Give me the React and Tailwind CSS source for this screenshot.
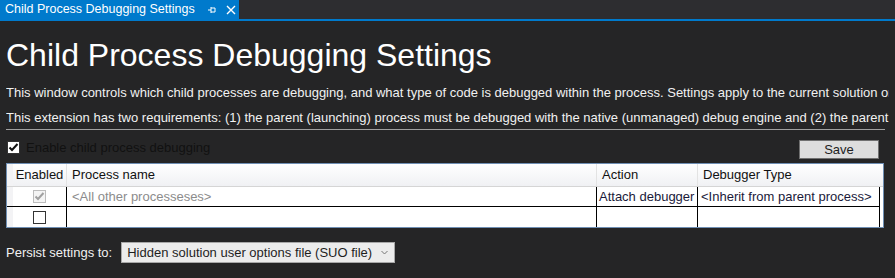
import React from "react";

const font = { fontFamily: '"Liberation Sans", Arial, sans-serif' };

const Check = ({ checked, disabled }) => (
  <div
    className={`w-[13px] h-[13px] border flex items-center justify-center ${
      disabled ? "border-[#bcbcbc] bg-[#f4f4f4]" : "border-[#333] bg-white"
    }`}
  >
    {checked && (
      <svg width="11" height="11" viewBox="0 0 11 11">
        <path
          d="M1.5 5.5 L4 8 L9.5 2"
          fill="none"
          stroke={disabled ? "#a0a0a0" : "#111"}
          strokeWidth="2"
        />
      </svg>
    )}
  </div>
);

const App = () => {
  return (
    <div className="w-[895px] h-[278px] bg-[#252526] overflow-hidden text-[13px]" style={font}>
      {/* tab strip */}
      <div className="flex h-[19px] bg-[#2d2d30]">
        <div className="flex items-center bg-[#007acc] text-white pl-[5px] w-[239px] whitespace-nowrap">
          <span className="text-[12.5px] leading-none">Child Process Debugging Settings</span>
          <svg className="ml-[12px]" width="10" height="10" viewBox="0 0 10 10">
            <path d="M1 5 H4 M4 2 V8 M4 3 H8 V7 H4" fill="none" stroke="#fff" strokeWidth="1" />
          </svg>
          <svg className="ml-[9px]" width="10" height="10" viewBox="0 0 10 10">
            <path d="M1 1 L9 9 M9 1 L1 9" fill="none" stroke="#fff" strokeWidth="1.4" />
          </svg>
        </div>
      </div>
      <div className="h-[2px] bg-[#007acc]" />

      <div className="px-[6px]">
        <h1 className="text-[32px] leading-none text-white mt-[18px] font-normal whitespace-nowrap">
          Child Process Debugging Settings
        </h1>
        <p className="text-[#f1f1f1] whitespace-nowrap overflow-hidden mt-[14px] leading-[16px]">
          This window controls which child processes are debugging, and what type of code is debugged within the process. Settings apply to the current solution only.
        </p>
        <p className="text-[#f1f1f1] whitespace-nowrap overflow-hidden mt-[9px] leading-[16px]">
          This extension has two requirements: (1) the parent (launching) process must be debugged with the native (unmanaged) debug engine and (2) the parent process must be started by the debugger.
        </p>
        <div className="h-px bg-[#a0a0a0] mt-[3px] mr-[4px]" />

        <div className="flex items-center justify-between mt-[10px] mr-[10px]">
          <div className="flex items-center gap-[6px] pl-[1px] -mt-[4px]">
            <Check checked />
            <span className="text-[#111]">Enable child process debugging</span>
          </div>
          <button className="w-[80px] h-[19px] bg-[#dddddd] border border-[#707070] text-[#1e1e1e] leading-none">
            Save
          </button>
        </div>

        <div className="mt-[4px] mr-[5px] border border-[#6f8fb4] bg-white flex">
          <div className="w-[6px] flex flex-col">
            <div className="h-[23px] bg-[#f3f3f5] border-b border-[#d5d5d5]" />
            <div className="h-[20px] bg-[#f3f3f5] border-b border-black" />
            <div className="h-[20px] bg-[#f3f3f5]" />
          </div>
          <div className="flex-1 flex flex-col">
            <div className="flex h-[23px] bg-gradient-to-b from-white to-[#f0f1f4] border-b border-[#d5d5d5] text-[#111]">
              <div className="w-[54px] flex items-center justify-center border-r border-[#e3e3e3]">Enabled</div>
              <div className="w-[530px] flex items-center pl-[5px] border-r border-[#e3e3e3]">Process name</div>
              <div className="w-[101px] flex items-center pl-[5px] border-r border-[#e3e3e3]">Action</div>
              <div className="flex-1 flex items-center pl-[5px]">Debugger Type</div>
            </div>
            <div className="flex h-[20px] border-b border-black mr-[3px] border-r">
              <div className="w-[54px] flex items-center justify-center border-r border-black">
                <Check checked disabled />
              </div>
              <div className="w-[530px] flex items-center pl-[5px] border-r border-black text-[#8c8c8c]">
                &lt;All other processeses&gt;
              </div>
              <div className="w-[101px] flex items-center pl-[2px] border-r border-black text-[#1a1a3a] whitespace-nowrap">
                Attach debugger
              </div>
              <div className="flex-1 flex items-center pl-[3px] text-[#1a1a3a] whitespace-nowrap">
                &lt;Inherit from parent process&gt;
              </div>
            </div>
            <div className="flex h-[20px] mr-[3px] border-r border-black">
              <div className="w-[54px] flex items-center justify-center border-r border-black">
                <Check />
              </div>
              <div className="w-[530px] border-r border-black" />
              <div className="w-[101px] border-r border-black" />
              <div className="flex-1" />
            </div>
          </div>
        </div>

        <div className="flex items-center mt-[14px]">
          <span className="text-[#f1f1f1]">Persist settings to:</span>
          <div className="ml-[9px] w-[274px] h-[21px] bg-[#ececec] border border-[#a8a8a8] flex items-center pl-[5px] pr-[6px] text-[#1e1e1e]">
            <span className="flex-1">Hidden solution user options file (SUO file)</span>
            <svg width="7" height="5" viewBox="0 0 7 5">
              <path d="M0.5 1 L3.5 4 L6.5 1" fill="none" stroke="#777" strokeWidth="1" />
            </svg>
          </div>
        </div>
      </div>
    </div>
  );
};

export default App;
